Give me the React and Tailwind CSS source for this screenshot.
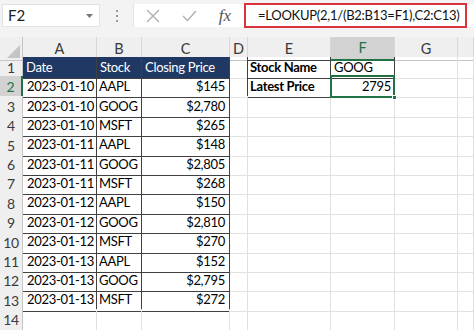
import React from "react";

const rows = [
  ["2023-01-10", "AAPL", "$145"],
  ["2023-01-10", "GOOG", "$2,780"],
  ["2023-01-10", "MSFT", "$265"],
  ["2023-01-11", "AAPL", "$148"],
  ["2023-01-11", "GOOG", "$2,805"],
  ["2023-01-11", "MSFT", "$268"],
  ["2023-01-12", "AAPL", "$150"],
  ["2023-01-12", "GOOG", "$2,810"],
  ["2023-01-12", "MSFT", "$270"],
  ["2023-01-13", "AAPL", "$152"],
  ["2023-01-13", "GOOG", "$2,795"],
  ["2023-01-13", "MSFT", "$272"],
];

const cols = "grid grid-cols-[23px_74px_45px_88px_18px_83px_64px_63px_1fr]";
const font = { fontFamily: "Lato, 'Noto Sans', sans-serif" };

function G({ children, className = "" }) {
  return (
    <div className={`border-r border-b border-[#e1e1e1] overflow-hidden whitespace-nowrap flex items-center ${className}`}>
      {children}
    </div>
  );
}

function T({ children, className = "" }) {
  return (
    <div className={`border-r border-b border-[#404040] overflow-hidden whitespace-nowrap flex items-center ${className}`}>
      {children}
    </div>
  );
}

function RowHead({ n, sel }) {
  return (
    <div
      className={`border-b border-r flex items-center justify-center text-[14px] ${
        sel ? "bg-[#d2d2d2] text-[#217346] border-r-[#217346] border-r-2 border-b-[#c6c6c6]" : "bg-[#efefef] text-[#3a3a3a] border-[#c6c6c6]"
      }`}
    >
      {n <= 14 ? n : ""}
    </div>
  );
}

export default function App() {
  const total = 15;
  return (
    <div className="w-[474px] h-[330px] overflow-hidden bg-white text-black" style={font}>
      {/* Top bar */}
      <div className="h-[37px] bg-[#f3f3f3] flex items-start pt-[4px] relative">
        <div className="ml-[2px] w-[98px] h-[23px] bg-white border border-[#e3e3e3] flex items-center justify-between pl-[5px] pr-[6px]">
          <span className="text-[15px] text-[#222]">F2</span>
          <svg width="7" height="4" viewBox="0 0 7 4"><path d="M0 0 L7 0 L3.5 4 Z" fill="#777" /></svg>
        </div>
        <div className="w-[33px] h-[23px] flex flex-col items-center justify-center gap-[3px]">
          <div className="w-[2px] h-[2px] bg-[#999]" />
          <div className="w-[2px] h-[2px] bg-[#999]" />
          <div className="w-[2px] h-[2px] bg-[#999]" />
        </div>
        <div className="flex-1 h-[23px] bg-white border-l border-[#e3e3e3] flex items-center">
          <div className="w-[37px] flex justify-center">
            <svg width="14" height="14" viewBox="0 0 14 14"><path d="M1 1 L13 13 M13 1 L1 13" stroke="#b0b0b0" strokeWidth="1.4" /></svg>
          </div>
          <div className="w-[37px] flex justify-center">
            <svg width="15" height="12" viewBox="0 0 15 12"><path d="M1 6 L5.5 10.5 L14 1" stroke="#b0b0b0" strokeWidth="1.4" fill="none" /></svg>
          </div>
          <div className="w-[34px] flex justify-center">
            <span className="italic text-[17px] text-[#555]" style={{ fontFamily: "'Liberation Serif', serif" }}>fx</span>
          </div>
        </div>
        <div className="absolute left-[244px] top-[3px] w-[223px] h-[25px] border-2 border-[#d9343c] flex items-center pl-[12px] overflow-hidden">
          <span className="text-[13px] tracking-[-0.25px] text-[#111] whitespace-nowrap">=LOOKUP(2,1/(B2:B13=F1),C2:C13)</span>
        </div>
      </div>

      {/* Column headers */}
      <div className={`${cols} h-[20px] bg-[#efefef]`}>
        <div className="border-r border-b border-[#c6c6c6] relative">
          <svg className="absolute right-[2px] bottom-[2px]" width="13" height="13" viewBox="0 0 13 13"><path d="M13 0 L13 13 L0 13 Z" fill="#c4c4c4" /></svg>
        </div>
        {["A", "B", "C", "D", "E", "F", "G", ""].map((c, i) => (
          <div
            key={i}
            className={`border-r border-[#d8d8d8] flex items-center justify-center text-[14.5px] ${
              c === "F"
                ? "bg-[#d2d2d2] text-[#217346] border-b-2 border-b-[#217346]"
                : c === "E" ? "text-[#3a3a3a] border-b border-b-[#404040]" : "text-[#3a3a3a] border-b border-b-[#c6c6c6]"
            }`}
          >
            {c}
          </div>
        ))}
      </div>

      {/* Rows */}
      {Array.from({ length: total }).map((_, r) => {
        const n = r + 1;
        const data = n >= 2 && n <= 13 ? rows[n - 2] : null;
        return (
          <div key={n} className={`${cols} h-[19.4px] text-[13px] tracking-[-0.3px]`}>
            <RowHead n={n} sel={n === 2} />
            {n === 1 ? (
              <>
                <T className="bg-[#203864] text-white pl-[3px]">Date</T>
                <T className="bg-[#203864] text-white pl-[3px]">Stock</T>
                <T className="bg-[#203864] text-white pl-[3px]">Closing Price</T>
              </>
            ) : data ? (
              <>
                <T className="pl-[4px]">{data[0]}</T>
                <T className="pl-[2px]">{data[1]}</T>
                <T className="justify-end pr-[4px]">{data[2]}</T>
              </>
            ) : (
              <>
                <G />
                <G />
                <G />
              </>
            )}
            {n <= 2 ? <div className="border-r border-b border-r-[#404040] border-b-[#e1e1e1]" /> : <G />}
            {n === 1 && <T className="font-bold pl-[2px]">Stock Name</T>}
            {n === 2 && <T className="font-bold pl-[2px]">Latest Price</T>}
            {n > 2 && <G />}
            {n === 1 && <T className="pl-[3px]">GOOG</T>}
            {n === 2 && (
              <div className="relative border-r border-b border-[#404040] flex items-center justify-end pr-[3px]">
                2795
                <div className="absolute -left-px -top-px -right-px -bottom-px border-2 border-[#217346]" />
                <div className="absolute -right-[3px] -bottom-[3px] w-[5px] h-[5px] bg-[#217346] border border-white" />
              </div>
            )}
            {n > 2 && <G />}
            <G />
            <G />
          </div>
        );
      })}
    </div>
  );
}
